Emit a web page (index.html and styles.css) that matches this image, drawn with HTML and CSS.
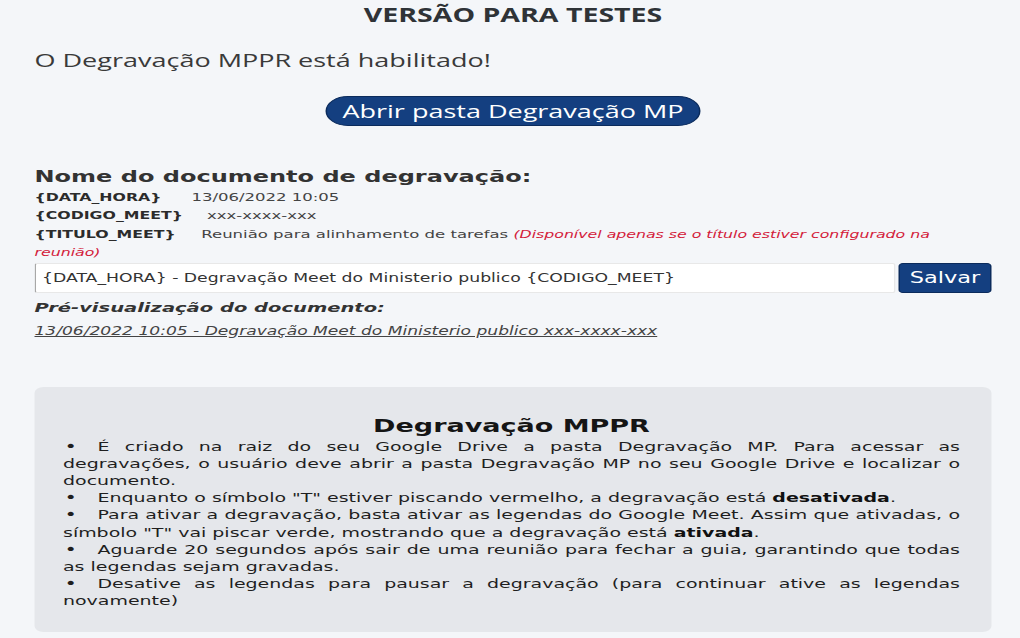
FILE: index.html
```html
<!DOCTYPE html>
<html lang="pt-BR">
<head>
<meta charset="utf-8">
<title>Degravação MPPR</title>
<link rel="stylesheet" href="styles.css">
</head>
<body>
<div class="page">
  <h1 class="title">VERSÃO PARA TESTES</h1>
  <p class="status">O Degravação MPPR está habilitado!</p>
  <div class="actions">
    <button class="btn-open" type="button">Abrir pasta Degravação MP</button>
  </div>

  <h2 class="doc-heading">Nome do documento de degravação:</h2>
  <div class="vars">
    <div class="var-row"><b class="var-name">{DATA_HORA}</b><span class="var-val v-data">13/06/2022 10:05</span></div>
    <div class="var-row"><b class="var-name">{CODIGO_MEET}</b><span class="var-val v-code">xxx-xxxx-xxx</span></div>
    <div class="var-row"><b class="var-name">{TITULO_MEET}</b><span class="var-val v-title">Reunião para alinhamento de tarefas</span> <em class="note">(Disponível apenas se o título estiver configurado na reunião)</em></div>
  </div>

  <div class="name-form">
    <input class="name-input" type="text" value="{DATA_HORA} - Degravação Meet do Ministerio publico {CODIGO_MEET}">
    <button class="btn-save" type="button">Salvar</button>
  </div>

  <h3 class="preview-heading">Pré-visualização do documento:</h3>
  <a class="preview-link" href="#">13/06/2022 10:05 - Degravação Meet do Ministerio publico xxx-xxxx-xxx</a>

  <section class="info-box">
    <h2 class="info-title">Degravação MPPR</h2>
    <div class="info-list">
      <p class="info-item"><span class="bullet">•</span>É criado na raiz do seu Google Drive a pasta Degravação MP. Para acessar as degravações, o usuário deve abrir a pasta Degravação MP no seu Google Drive e localizar o documento.</p>
      <p class="info-item"><span class="bullet">•</span>Enquanto o símbolo "T" estiver piscando vermelho, a degravação está <b>desativada</b>.</p>
      <p class="info-item"><span class="bullet">•</span>Para ativar a degravação, basta ativar as legendas do Google Meet. Assim que ativadas,&nbsp;o símbolo "T" vai piscar verde, mostrando que a degravação está <b>ativada</b>.</p>
      <p class="info-item"><span class="bullet">•</span>Aguarde 20 segundos após sair de uma reunião para fechar a guia, garantindo que todas as legendas sejam gravadas.</p>
      <p class="info-item"><span class="bullet">•</span>Desative as legendas para pausar a degravação (para continuar ative as legendas novamente)</p>
    </div>
  </section>
</div>
</body>
</html>
```

FILE: styles.css
```css
html, body {
  margin: 0;
  padding: 0;
  background: #f4f6f9;
  overflow: hidden;
}

.page {
  width: 680px;
  box-sizing: border-box;
  padding: 3px 19px 0 23px;
  transform: scaleX(1.5);
  transform-origin: 0 0;
  font-family: "DejaVu Sans", sans-serif;
  color: #333;
}

.title {
  margin: 0;
  text-align: center;
  font: 700 19px/24px "Open Sans", sans-serif;
  color: #2f3337;
}

.status {
  margin: 21px 0 0;
  font: 400 18px/24px "Open Sans", sans-serif;
  color: #3a3a3a;
}

.actions {
  display: flex;
  justify-content: center;
  margin-top: 24px;
}

.btn-open {
  font: 400 18px/24px "Open Sans", sans-serif;
  color: #fff;
  background: #143f80;
  border: 1px solid #0b2b5c;
  border-radius: 16px;
  padding: 2px 10px;
  cursor: pointer;
}

.doc-heading {
  margin: 41px 0 0;
  font: 700 16px/20px "DejaVu Sans", sans-serif;
  color: #333;
}

.vars {
  margin-top: 2px;
  font-size: 11px;
  line-height: 18.4px;
  color: #444;
}

.var-row > *,
.var-row em {
  line-height: 1;
}

.var-name {
  font-size: 10.5px;
  font-weight: 700;
  color: #2b2b2b;
}

.v-data { margin-left: 20px; }
.v-code { margin-left: 16px; }
.v-title { margin-left: 17px; }

.note {
  font-size: 10.5px;
  color: #d3203a;
}

.name-form {
  display: flex;
  gap: 2px;
  margin-top: 0;
  height: 30px;
}

.name-input {
  flex: 1;
  min-width: 0;
  box-sizing: border-box;
  height: 30px;
  margin: 0;
  padding: 0 4px;
  font: 400 11.5px "DejaVu Sans", sans-serif;
  color: #333;
  background: #fff;
  border: 1px solid #e8e8e8;
  border-left-color: #a8a8a8;
  border-radius: 2px;
  outline: none;
}

.btn-save {
  box-sizing: border-box;
  width: 62px;
  height: 30px;
  margin: 0;
  padding: 0;
  font: 400 15px "DejaVu Sans", sans-serif;
  color: #fff;
  background: #143f80;
  border: 1px solid #0b2b5c;
  border-radius: 3px;
  cursor: pointer;
}

.preview-heading {
  margin: 6px 0 0;
  font: italic 700 13px/18px "DejaVu Sans", sans-serif;
  color: #333;
}

.preview-link {
  display: block;
  margin-top: 5px;
  font: italic 400 11.4px/18px "DejaVu Sans", sans-serif;
  color: #444;
  text-decoration: underline;
}

.info-box {
  margin-top: 47px;
  padding: 27px 21px 22px 19px;
  background: #e5e7eb;
  border-radius: 6px;
}

.info-title {
  margin: 0;
  text-align: center;
  font: 700 18px/24px "DejaVu Sans", sans-serif;
  color: #151515;
}

.info-list {
  font-size: 12.65px;
  line-height: 17.2px;
  color: #1f1f1f;
  text-align: justify;
}

.info-item {
  margin: 0;
}

.bullet {
  display: inline-block;
  width: 23px;
  padding-left: 1px;
  box-sizing: border-box;
  font-size: 14px;
  line-height: 1;
}

.info-item b {
  font-weight: 700;
  color: #111;
}
```
